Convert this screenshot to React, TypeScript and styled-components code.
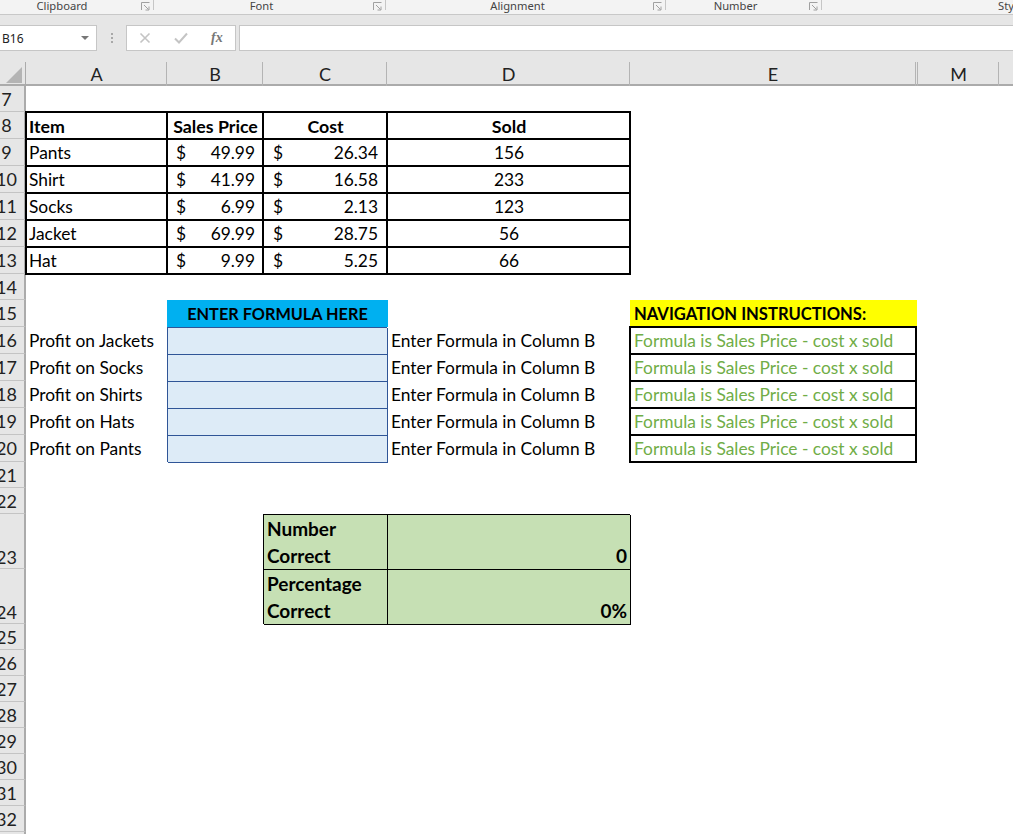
import React from "react";
import styled, { createGlobalStyle } from "styled-components";

const GlobalStyle = createGlobalStyle`
  html, body {
    margin: 0;
    padding: 0;
    background: #ffffff;
    overflow: hidden;
  }
  * {
    box-sizing: border-box;
  }
`;

const COLUMNS = "26px 141px 96px 124px 243px 286px 2px 81px 1fr";

const Page = styled.div`
  width: 1013px;
  height: 834px;
  overflow: hidden;
  display: flex;
  flex-direction: column;
  color: #000000;
  font-family: "Lato", "Liberation Sans", sans-serif;
`;

/* ribbon group labels */
const Ribbon = styled.div`
  height: 15px;
  flex: none;
  display: flex;
  background: #f3f3f3;
  border-bottom: 1px solid #c8c8c8;
  font-family: "Noto Sans", "Open Sans", sans-serif;
  font-size: 11.2px;
  color: #444444;
  overflow: hidden;
`;

const RibbonGroup = styled.div<{ $width: number; $inset?: number }>`
  position: relative;
  flex: 0 0 ${(p) => p.$width}px;
  height: 10px;
  display: flex;
  justify-content: center;
  line-height: 11px;
  border-right: 1px solid #c6c6c6;
  padding-right: ${(p) => p.$inset ?? 14}px;
`;

const Launcher = styled.svg`
  position: absolute;
  right: 3px;
  top: 2px;
  width: 9px;
  height: 9px;
`;

const StylesLabel = styled.div`
  flex: 1;
  line-height: 11px;
  padding-left: 176px;
  white-space: nowrap;
`;

const FormulaBar = styled.div`
  height: 47px;
  flex: none;
  padding-top: 10px;
  padding-bottom: 11px;
  background: #e6e6e6;
  display: flex;
`;

const NameBox = styled.div`
  width: 97px;
  height: 26px;
  background: #ffffff;
  border: 1px solid #c6c6c6;
  border-left: 0;
  padding: 0 7px 0 2px;
  display: flex;
  align-items: center;
  justify-content: space-between;
  font-family: "Noto Sans", "Open Sans", sans-serif;
  font-size: 12px;
  color: #222222;
`;

const Caret = styled.span`
  width: 0;
  height: 0;
  border-left: 4px solid transparent;
  border-right: 4px solid transparent;
  border-top: 4px solid #777777;
`;

const Grip = styled.div`
  width: 29px;
  display: flex;
  flex-direction: column;
  align-items: center;
  justify-content: center;
  gap: 2px;
`;

const GripDot = styled.span`
  width: 2px;
  height: 2px;
  background: #a8a8a8;
`;

const ButtonBox = styled.div`
  width: 110px;
  height: 26px;
  background: #ffffff;
  border: 1px solid #c6c6c6;
  display: flex;
  align-items: center;
  padding-left: 12px;
  gap: 23px;
`;

const Fx = styled.span`
  font-family: "Liberation Serif", serif;
  font-style: italic;
  font-weight: 700;
  font-size: 14px;
  color: #777777;
`;

const FormulaInput = styled.div`
  flex: 1;
  height: 26px;
  margin-left: 3px;
  background: #ffffff;
  border: 1px solid #c6c6c6;
  border-right: 0;
`;

const ColumnHeader = styled.div`
  height: 24px;
  flex: none;
  display: grid;
  grid-template-columns: ${COLUMNS};
  background: #e6e6e6;
  border-bottom: 2px solid #ababab;
`;

const ColumnLabel = styled.div<{ $borderless?: boolean }>`
  display: flex;
  align-items: center;
  justify-content: center;
  font-size: 18px;
  padding-left: 1px;
  color: #222222;
  border-right: ${(p) => (p.$borderless ? "0" : "1px solid #b4b4b4")};
`;

const Corner = styled.div`
  border-right: 1px solid #ababab;
  padding: 4px 0 0 6px;
`;

const Row = styled.div<{ $height: number }>`
  height: ${(p) => p.$height}px;
  display: grid;
  grid-template-columns: ${COLUMNS};
  flex: none;
`;

const RowLabel = styled.div<{ $bottom?: boolean }>`
  background: #e6e6e6;
  border-right: 2px solid #ababab;
  border-bottom: 1px solid #c4c4c4;
  padding-right: 11px;
  display: flex;
  justify-content: center;
  align-items: ${(p) => (p.$bottom ? "flex-end" : "center")};
  font-size: 18px;
  color: #222222;
  overflow: hidden;
  white-space: nowrap;
`;

type Tone = "plain" | "black" | "blue" | "green";

const toneBackground: Record<Tone, string> = {
  plain: "transparent",
  black: "transparent",
  blue: "#ddebf7",
  green: "#c6e0b4",
};

const toneBorder: Record<Tone, string> = {
  plain: "none",
  black: "0 0 0 1px #000000, inset 0 0 0 1px #000000",
  blue: "inset 1px 1px 0 #2f5597, 1px 1px 0 #2f5597",
  green: "inset 1px 1px 0 #000000, 1px 1px 0 #000000",
};

const Cell = styled.div<{
  $span?: number;
  $tone?: Tone;
  $align?: "left" | "center" | "right";
  $bold?: boolean;
  $size?: number;
  $color?: string;
}>`
  grid-column: span ${(p) => p.$span ?? 1};
  position: relative;
  display: flex;
  align-items: center;
  justify-content: ${(p) =>
    p.$align === "center" ? "center" : p.$align === "right" ? "flex-end" : "flex-start"};
  padding: 0 3px 0 4px;
  font-size: ${(p) => p.$size ?? 17.35}px;
  font-weight: ${(p) => (p.$bold ? 700 : 400)};
  color: ${(p) => p.$color ?? "#000000"};
  white-space: nowrap;
  background: ${(p) => toneBackground[p.$tone ?? "plain"]};
  box-shadow: ${(p) => toneBorder[p.$tone ?? "plain"]};
`;

const NameCell = styled(Cell)`
  padding-left: 3px;
`;

const HeadingCell = styled(Cell)<{ $fill: string }>`
  background: ${(p) => p.$fill};
  box-shadow: 1px 0 0 ${(p) => p.$fill};
`;

const Accounting = styled(Cell)<{ $dollarAt: number; $endAt: number }>`
  justify-content: space-between;
  padding: 0 ${(p) => p.$endAt}px 0 ${(p) => p.$dollarAt}px;
`;

const StackedCell = styled(Cell)`
  display: block;
  padding-top: 1px;
  line-height: 27px;
`;

const BottomCell = styled(Cell)`
  align-items: flex-end;
  line-height: 27px;
`;

const Launch = () => (
  <Launcher viewBox="0 0 9 9">
    <path d="M0.5 8V0.5H8.5M3 3L7.5 7.5M4.5 8H8V4.5" fill="none" stroke="#a0a0a0" strokeWidth="1" />
  </Launcher>
);

const products = [
  { row: 9, item: "Pants", price: "49.99", cost: "26.34", sold: "156" },
  { row: 10, item: "Shirt", price: "41.99", cost: "16.58", sold: "233" },
  { row: 11, item: "Socks", price: "6.99", cost: "2.13", sold: "123" },
  { row: 12, item: "Jacket", price: "69.99", cost: "28.75", sold: "56" },
  { row: 13, item: "Hat", price: "9.99", cost: "5.25", sold: "66" },
];

const profits = [
  { row: 16, label: "Profit on Jackets" },
  { row: 17, label: "Profit on Socks" },
  { row: 18, label: "Profit on Shirts" },
  { row: 19, label: "Profit on Hats" },
  { row: 20, label: "Profit on Pants" },
];

const App: React.FC = () => {
  return (
    <Page>
      <GlobalStyle />
      <Ribbon>
        <RibbonGroup $width={154} $inset={29}>
          Clipboard
          <Launch />
        </RibbonGroup>
        <RibbonGroup $width={232} $inset={16}>
          Font
          <Launch />
        </RibbonGroup>
        <RibbonGroup $width={280} $inset={16}>
          Alignment
          <Launch />
        </RibbonGroup>
        <RibbonGroup $width={156} $inset={16}>
          Number
          <Launch />
        </RibbonGroup>
        <StylesLabel>Styles</StylesLabel>
      </Ribbon>

      <FormulaBar>
        <NameBox>
          B16
          <Caret />
        </NameBox>
        <Grip>
          <GripDot />
          <GripDot />
          <GripDot />
        </Grip>
        <ButtonBox>
          <svg width="12" height="12" viewBox="0 0 12 12">
            <path d="M1.5 1.5L10.5 10.5M10.5 1.5L1.5 10.5" stroke="#c4c4c4" strokeWidth="1.6" fill="none" />
          </svg>
          <svg width="14" height="12" viewBox="0 0 14 12">
            <path d="M1 6.5L5 10.5L13 1.5" stroke="#c4c4c4" strokeWidth="2" fill="none" />
          </svg>
          <Fx>fx</Fx>
        </ButtonBox>
        <FormulaInput />
      </FormulaBar>

      <ColumnHeader>
        <Corner>
          <svg width="17" height="17" viewBox="0 0 17 17">
            <path d="M0 17L16 1V17Z" fill="#b4b4b4" />
          </svg>
        </Corner>
        <ColumnLabel>A</ColumnLabel>
        <ColumnLabel>B</ColumnLabel>
        <ColumnLabel>C</ColumnLabel>
        <ColumnLabel>D</ColumnLabel>
        <ColumnLabel>E</ColumnLabel>
        <ColumnLabel />
        <ColumnLabel>M</ColumnLabel>
        <ColumnLabel $borderless />
      </ColumnHeader>

      <Row $height={26}>
        <RowLabel>7</RowLabel>
      </Row>

      <Row $height={27}>
        <RowLabel>8</RowLabel>
        <NameCell $tone="black" $bold $size={17.8}>Item</NameCell>
        <Cell $tone="black" $bold $size={17.8} $align="center">Sales Price</Cell>
        <Cell $tone="black" $bold $size={17.8} $align="center">Cost</Cell>
        <Cell $tone="black" $bold $size={17.8} $align="center">Sold</Cell>
      </Row>

      {products.map((p) => (
        <Row $height={27} key={p.row}>
          <RowLabel>{p.row}</RowLabel>
          <NameCell $tone="black">{p.item}</NameCell>
          <Accounting $tone="black" $dollarAt={9} $endAt={8}>
            <span>$</span>
            <span>{p.price}</span>
          </Accounting>
          <Accounting $tone="black" $dollarAt={10} $endAt={9}>
            <span>$</span>
            <span>{p.cost}</span>
          </Accounting>
          <Cell $tone="black" $align="center">{p.sold}</Cell>
        </Row>
      ))}

      <Row $height={26}>
        <RowLabel>14</RowLabel>
      </Row>

      <Row $height={27}>
        <RowLabel>15</RowLabel>
        <Cell />
        <HeadingCell $span={2} $fill="#00b0f0" $bold $size={16.3} $align="center">ENTER FORMULA HERE</HeadingCell>
        <Cell />
        <HeadingCell $fill="#ffff00" $bold $size={16.6}>NAVIGATION INSTRUCTIONS:</HeadingCell>
      </Row>

      {profits.map((p) => (
        <Row $height={27} key={p.row}>
          <RowLabel>{p.row}</RowLabel>
          <NameCell>{p.label}</NameCell>
          <Cell $span={2} $tone="blue" />
          <Cell>Enter Formula in Column B</Cell>
          <Cell $tone="black" $color="#70ad47">Formula is Sales Price - cost x sold</Cell>
        </Row>
      ))}

      <Row $height={26}>
        <RowLabel>21</RowLabel>
      </Row>
      <Row $height={26}>
        <RowLabel>22</RowLabel>
      </Row>

      <Row $height={55}>
        <RowLabel $bottom>23</RowLabel>
        <Cell $span={2} />
        <StackedCell $tone="green" $bold $size={19}>
          Number
          <br />
          Correct
        </StackedCell>
        <BottomCell $tone="green" $bold $size={19} $align="right">0</BottomCell>
      </Row>
      <Row $height={55}>
        <RowLabel $bottom>24</RowLabel>
        <Cell $span={2} />
        <StackedCell $tone="green" $bold $size={19}>
          Percentage
          <br />
          Correct
        </StackedCell>
        <BottomCell $tone="green" $bold $size={19} $align="right">0%</BottomCell>
      </Row>

      {[25, 26, 27, 28, 29, 30, 31, 32, 33].map((n) => (
        <Row $height={26} key={n}>
          <RowLabel>{n === 33 ? "" : n}</RowLabel>
        </Row>
      ))}
    </Page>
  );
};

export default App;
